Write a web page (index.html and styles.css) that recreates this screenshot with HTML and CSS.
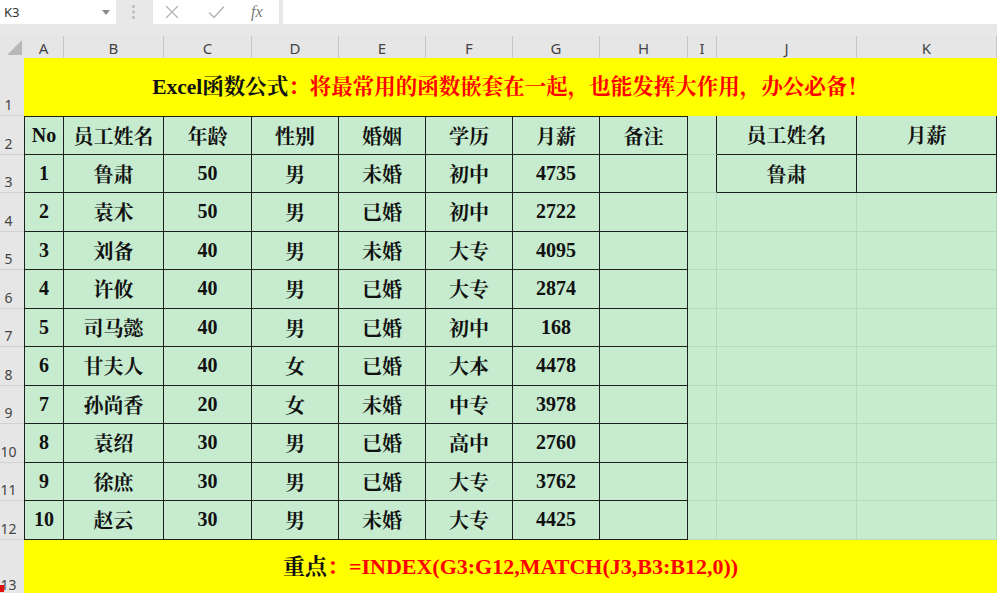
FILE: index.html
```html
<!DOCTYPE html>
<html lang="zh-CN">
<head>
<meta charset="utf-8">
<title>Excel INDEX MATCH</title>
<link rel="stylesheet" href="styles.css">
</head>
<body>
<div class="app">
  <div class="fbar">
    <div class="namebox"><span class="ref">K3</span><svg class="caret" width="8" height="5" viewBox="0 0 8 5"><path d="M0 0 L8 0 L4 5 Z" fill="#8a8a8a"/></svg></div>
    <div class="grip"><svg width="3" height="14" viewBox="0 0 3 14"><rect x="0" y="0" width="3" height="3" fill="#c4c4c4"/><rect x="0" y="5.5" width="3" height="3" fill="#c4c4c4"/><rect x="0" y="11" width="3" height="3" fill="#c4c4c4"/></svg></div>
    <div class="btns">
      <svg class="ico-x" width="14" height="14" viewBox="0 0 14 14"><path d="M1 1 L13 13 M13 1 L1 13" stroke="#b4b4b4" stroke-width="1.4" fill="none"/></svg>
      <svg class="ico-ok" width="17" height="14" viewBox="0 0 17 14"><path d="M1 7.5 L6 12.5 L16 1.5" stroke="#b4b4b4" stroke-width="1.5" fill="none"/></svg>
      <span class="fx">fx</span>
    </div>
    <div class="finput"></div>
  </div>

  <div class="sheet">
    <div class="corner"><svg width="24" height="22" viewBox="0 0 24 22"><path d="M22 4 L22 19 L7 19 Z" fill="#b8b8b8"/></svg></div>
    <div class="ch">A</div><div class="ch">B</div><div class="ch">C</div><div class="ch">D</div><div class="ch">E</div><div class="ch">F</div><div class="ch">G</div><div class="ch">H</div><div class="ch">I</div><div class="ch">J</div><div class="ch">K</div>

    <div class="rh">1</div>
    <div class="title"><span class="k">Excel函数公式</span><span class="r">：将最常用的函数嵌套在一起，也能发挥大作用，办公必备！</span></div>

    <div class="rh">2</div>
    <div class="c b bl bt">No</div><div class="c b bt">员工姓名</div><div class="c b bt">年龄</div><div class="c b bt">性别</div><div class="c b bt">婚姻</div><div class="c b bt">学历</div><div class="c b bt">月薪</div><div class="c b bt">备注</div><div class="c br"></div><div class="c b">员工姓名</div><div class="c b">月薪</div>

    <div class="rh">3</div>
    <div class="c b bl">1</div><div class="c b">鲁肃</div><div class="c b">50</div><div class="c b">男</div><div class="c b">未婚</div><div class="c b">初中</div><div class="c b">4735</div><div class="c b"></div><div class="c br"></div><div class="c b">鲁肃</div><div class="c b"></div>

    <div class="rh">4</div>
    <div class="c b bl">2</div><div class="c b">袁术</div><div class="c b">50</div><div class="c b">男</div><div class="c b">已婚</div><div class="c b">初中</div><div class="c b">2722</div><div class="c b"></div><div class="c"></div><div class="c"></div><div class="c"></div>

    <div class="rh">5</div>
    <div class="c b bl">3</div><div class="c b">刘备</div><div class="c b">40</div><div class="c b">男</div><div class="c b">未婚</div><div class="c b">大专</div><div class="c b">4095</div><div class="c b"></div><div class="c"></div><div class="c"></div><div class="c"></div>

    <div class="rh">6</div>
    <div class="c b bl">4</div><div class="c b">许攸</div><div class="c b">40</div><div class="c b">男</div><div class="c b">已婚</div><div class="c b">大专</div><div class="c b">2874</div><div class="c b"></div><div class="c"></div><div class="c"></div><div class="c"></div>

    <div class="rh">7</div>
    <div class="c b bl">5</div><div class="c b">司马懿</div><div class="c b">40</div><div class="c b">男</div><div class="c b">已婚</div><div class="c b">初中</div><div class="c b">168</div><div class="c b"></div><div class="c"></div><div class="c"></div><div class="c"></div>

    <div class="rh">8</div>
    <div class="c b bl">6</div><div class="c b">甘夫人</div><div class="c b">40</div><div class="c b">女</div><div class="c b">已婚</div><div class="c b">大本</div><div class="c b">4478</div><div class="c b"></div><div class="c"></div><div class="c"></div><div class="c"></div>

    <div class="rh">9</div>
    <div class="c b bl">7</div><div class="c b">孙尚香</div><div class="c b">20</div><div class="c b">女</div><div class="c b">未婚</div><div class="c b">中专</div><div class="c b">3978</div><div class="c b"></div><div class="c"></div><div class="c"></div><div class="c"></div>

    <div class="rh">10</div>
    <div class="c b bl">8</div><div class="c b">袁绍</div><div class="c b">30</div><div class="c b">男</div><div class="c b">已婚</div><div class="c b">高中</div><div class="c b">2760</div><div class="c b"></div><div class="c"></div><div class="c"></div><div class="c"></div>

    <div class="rh">11</div>
    <div class="c b bl">9</div><div class="c b">徐庶</div><div class="c b">30</div><div class="c b">男</div><div class="c b">已婚</div><div class="c b">大专</div><div class="c b">3762</div><div class="c b"></div><div class="c"></div><div class="c"></div><div class="c"></div>

    <div class="rh">12</div>
    <div class="c b bl">10</div><div class="c b">赵云</div><div class="c b">30</div><div class="c b">男</div><div class="c b">未婚</div><div class="c b">大专</div><div class="c b">4425</div><div class="c b"></div><div class="c"></div><div class="c"></div><div class="c"></div>

    <div class="rh last">13</div>
    <div class="foot"><span class="k">重点</span><span class="r">：=INDEX(G3:G12,MATCH(J3,B3:B12,0))</span></div>
  </div>
</div>
</body>
</html>
```

FILE: styles.css
```css
html, body {
  margin: 0;
  padding: 0;
}
body {
  width: 997px;
  height: 593px;
  overflow: hidden;
  background: #e8e8e8;
}
.app {
  display: flex;
  flex-direction: column;
  gap: 12px;
}
.fbar {
  display: flex;
  height: 24px;
  font-family: "Noto Sans", "Open Sans", sans-serif;
}
.namebox {
  width: 116px;
  box-sizing: border-box;
  background: #fff;
  display: flex;
  align-items: center;
  justify-content: space-between;
  padding: 0 6px 0 4px;
}
.ref {
  font-size: 13px;
  color: #333;
}
.grip {
  width: 37px;
  display: flex;
  align-items: center;
  justify-content: center;
  padding-right: 3px;
  box-sizing: border-box;
}
.btns {
  width: 126px;
  background: #fff;
  display: flex;
  align-items: center;
  padding-left: 12px;
  box-sizing: border-box;
}
.ico-ok {
  margin-left: 29px;
}
.fx {
  margin-left: 26px;
  font-family: "Liberation Serif", serif;
  font-style: italic;
  font-size: 16px;
  color: #7a7a7a;
  line-height: 1;
}
.finput {
  flex: 1;
  margin-left: 4px;
  background: #fff;
}

.sheet {
  display: grid;
  grid-template-columns: 24px 40px 100px 88px 87px 87px 87px 87px 88px 29px 140px 140px;
  grid-template-rows: 22px 58px repeat(11, 38.5px) 54px;
}
.corner {
  background: #e6e6e6;
  display: flex;
}
.ch {
  background: #e6e6e6;
  border-right: 1px solid #c6c6c6;
  box-sizing: border-box;
  display: flex;
  align-items: center;
  justify-content: center;
  font-family: "Noto Sans", "Open Sans", sans-serif;
  font-size: 15px;
  color: #444;
  padding-top: 1px;
}
.rh {
  position: relative;
  background: #e6e6e6;
  border-bottom: 1px solid #d2d2d2;
  box-sizing: border-box;
  display: flex;
  align-items: flex-end;
  justify-content: center;
  padding: 0 7px 1px 0;
  font-family: "Noto Sans", "Open Sans", sans-serif;
  font-size: 14px;
  line-height: 18px;
  color: #444;
}
.rh.last {
  border-bottom: 0;
  padding-bottom: 0;
}
.rh.last::before {
  content: "";
  position: absolute;
  left: 0;
  bottom: 2px;
  width: 4px;
  height: 7px;
  background: #e01010;
}
.title, .foot {
  grid-column: span 11;
  background: #ffff00;
  display: flex;
  align-items: center;
  justify-content: center;
  font-family: "Liberation Serif", "Noto Serif CJK SC", "Noto Sans CJK SC", serif;
  font-weight: bold;
  font-size: 21.5px;
  line-height: 26px;
}
.foot {
  align-items: flex-start;
  font-size: 22px;
  line-height: 26px;
  padding-top: 14px;
  box-sizing: border-box;
}
.k {
  color: #111;
}
.r {
  color: #ff0000;
}
.c {
  background: #c6ebce;
  border-right: 1px solid #b6d9bd;
  border-bottom: 1px solid #b6d9bd;
  box-sizing: border-box;
  display: flex;
  align-items: center;
  justify-content: center;
  font-family: "Liberation Serif", "Noto Serif CJK SC", "Noto Sans CJK SC", serif;
  font-weight: bold;
  font-size: 20px;
  color: #111;
}
.c.b {
  border-right-color: #1e1e1e;
  border-bottom-color: #1e1e1e;
}
.c.bl {
  border-left: 1px solid #1e1e1e;
}
.c.bt {
  border-top: 1px solid #1e1e1e;
}
.c.br {
  border-right-color: #1e1e1e;
}
```
